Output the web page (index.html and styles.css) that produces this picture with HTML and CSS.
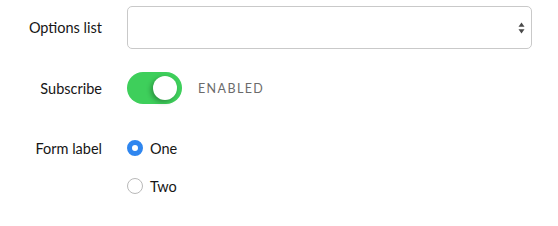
FILE: index.html
```html
<!DOCTYPE html>
<html lang="en">
<head>
  <meta charset="UTF-8" />
  <title>Form</title>
  <link rel="stylesheet" href="styles.css">
</head>
<body>
  <form class="form">
    <div class="row row-select">
      <label class="label" for="options">Options list</label>
      <div class="select-wrap">
        <select id="options" class="select"></select>
        <svg class="select-arrows" width="7" height="12" viewBox="0 0 7 12">
          <path d="M3.5 0.5 L6.5 4.8 L0.5 4.8 Z" fill="#4a4a4a"/>
          <path d="M3.5 11.5 L6.5 7.2 L0.5 7.2 Z" fill="#4a4a4a"/>
        </svg>
      </div>
    </div>

    <div class="row row-toggle">
      <span class="label">Subscribe</span>
      <div class="field">
        <span class="toggle" role="switch" aria-checked="true"><span class="knob"></span></span>
        <span class="toggle-text">ENABLED</span>
      </div>
    </div>

    <div class="row row-radio">
      <span class="label">Form label</span>
      <label class="radio"><span class="dot checked"></span>One</label>
    </div>

    <div class="row row-radio2">
      <span class="label"></span>
      <label class="radio"><span class="dot"></span>Two</label>
    </div>
  </form>
</body>
</html>
```

FILE: styles.css
```css
body {
  margin: 0;
  background: #fff;
  font-family: 'Lato', 'Open Sans', sans-serif;
  color: #161616;
}

.form {
  display: flex;
  flex-direction: column;
  padding-top: 6px;
}

.row {
  display: flex;
  align-items: center;
  gap: 25px;
}

.label {
  width: 102px;
  text-align: right;
  font-size: 14.5px;
  flex-shrink: 0;
}

.row-select {
  height: 43px;
}

.select-wrap {
  position: relative;
  width: 405px;
  height: 43px;
}

.select {
  appearance: none;
  -webkit-appearance: none;
  width: 100%;
  height: 100%;
  margin: 0;
  border: 1px solid #c9c9c9;
  border-radius: 5px;
  background: #fff;
  box-sizing: border-box;
}

.select-arrows {
  position: absolute;
  right: 7px;
  top: 16px;
}

.row-toggle {
  margin-top: 23px;
  height: 32px;
}

.field {
  display: flex;
  align-items: center;
  gap: 16px;
}

.toggle {
  width: 55px;
  height: 32px;
  border-radius: 16px;
  background: #3ecf5b;
  position: relative;
  display: block;
}

.knob {
  position: absolute;
  top: 4px;
  right: 5px;
  width: 24px;
  height: 24px;
  border-radius: 50%;
  background: #fff;
  box-shadow: -2px 2px 5px rgba(0, 0, 0, 0.3);
}

.toggle-text {
  font-size: 12.5px;
  letter-spacing: 1.4px;
  color: #6b6b6b;
}

.row-radio {
  margin-top: 33px;
  height: 22px;
}

.row-radio2 {
  margin-top: 16px;
  height: 22px;
}

.radio {
  display: flex;
  align-items: center;
  gap: 7px;
  font-size: 14.5px;
}

.dot {
  width: 16px;
  height: 16px;
  border-radius: 50%;
  box-sizing: border-box;
  border: 1px solid #b9b9b9;
  background: #fff;
}

.dot.checked {
  border: 5px solid #2f86ef;
}
```
